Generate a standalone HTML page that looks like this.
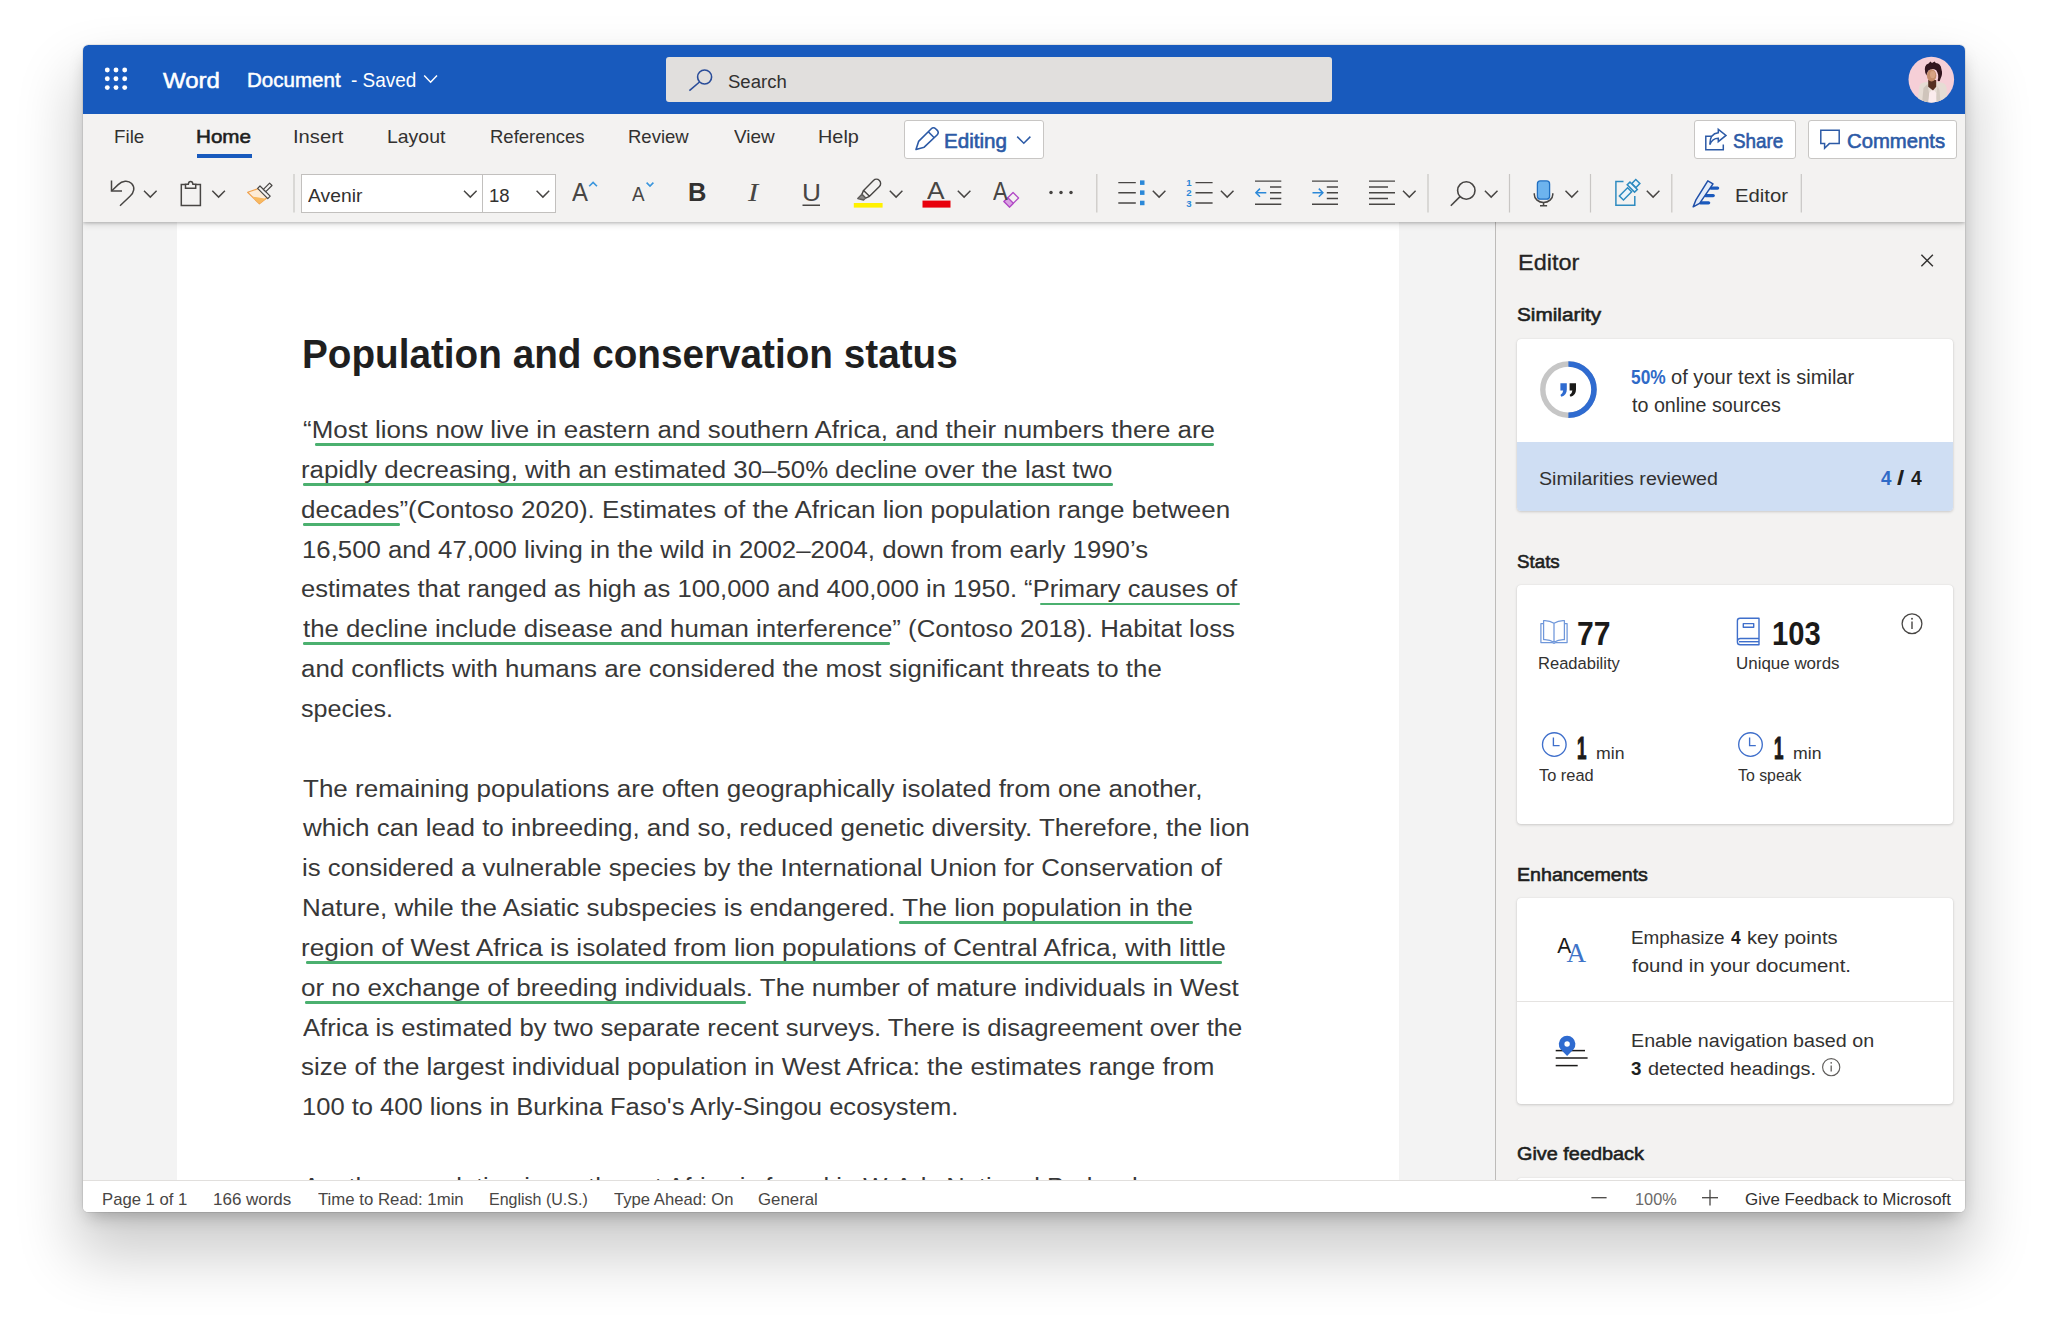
<!DOCTYPE html>
<html lang="en">
<head>
<meta charset="utf-8">
<title>Word - Document</title>
<style>
html,body{margin:0;padding:0;}
body{width:2048px;height:1331px;position:relative;overflow:hidden;background:#fff;font-family:"Liberation Sans",sans-serif;}
#win{position:absolute;left:83px;top:45px;width:1882px;height:1167px;border-radius:5.5px;
 box-shadow:0 0 0 1px rgba(0,0,0,.07),0 8px 18px -5px rgba(0,0,0,.27),0 37px 60px 8px rgba(0,0,0,.195);}
#clip{position:absolute;left:0;top:0;width:1882px;height:1167px;border-radius:5.5px;overflow:hidden;background:#f3f3f3;}
#pg{position:absolute;left:-83px;top:-45px;width:2048px;height:1331px;}
.a{position:absolute;}
#title{left:83px;top:45px;width:1882px;height:68.5px;background:#185abd;}
#search{left:666px;top:57px;width:666px;height:45px;background:#e1dfdd;border-radius:3px;}
#ribbon{left:83px;top:113px;width:1882px;height:109px;background:#f3f2f1;box-shadow:0 1px 3px rgba(0,0,0,.22),0 3px 7px rgba(0,0,0,.10);}
.btn{background:#fff;border:1px solid #c8c6c4;border-radius:3px;box-sizing:border-box;}
#fontbox{left:300.5px;top:174px;width:255px;height:39px;background:#fff;border:1px solid #c2c0be;box-sizing:border-box;}
#fontdiv{left:481.5px;top:175px;width:1px;height:37px;background:#c2c0be;}
#page{left:177px;top:222px;width:1222px;height:958px;background:#fff;}
#side{left:1495px;top:222px;width:470px;height:958px;background:#f3f2f1;border-left:1px solid #bdbbb9;box-sizing:border-box;}
.card{background:#fff;border-radius:4px;box-shadow:0 1px 3px rgba(0,0,0,.16),0 0 1px rgba(0,0,0,.12);}
#status{left:83px;top:1180px;width:1882px;height:32px;background:#fff;border-top:1px solid #e1dfdd;box-sizing:border-box;}
.t{position:absolute;white-space:pre;line-height:1;transform-origin:0 0;}
.ul{position:absolute;height:2.7px;border-radius:1.3px;background:#4bb06f;}
svg{position:absolute;left:0;top:0;overflow:visible;}
</style>
</head>
<body>
<div id="win"><div id="clip"><div id="pg">
<div class="a" id="page"></div>
<div class="a" id="doc" style="left:0;top:0;width:2048px;height:1180px;overflow:hidden;">
<div class="ul" style="left:315.0px;top:443.20px;width:898.8px"></div>
<div class="ul" style="left:302.5px;top:483.03px;width:810.0px"></div>
<div class="ul" style="left:302.5px;top:522.86px;width:97.5px"></div>
<div class="ul" style="left:1039.5px;top:602.52px;width:200.0px"></div>
<div class="ul" style="left:302.5px;top:642.35px;width:587.0px"></div>
<div class="ul" style="left:898.5px;top:921.16px;width:294.1px"></div>
<div class="ul" style="left:305.5px;top:960.99px;width:916.5px"></div>
<div class="ul" style="left:305.0px;top:1000.82px;width:441.2px"></div>
<span class="t" style="left:301.68px;top:335.00px;font-size:39.8px;color:#1f1f1f;font-weight:700;transform:scaleX(0.9722);">Population and conservation status</span>
<span class="t" style="left:303.12px;top:419.00px;font-size:23px;color:#383838;transform:scaleX(1.1270);">“Most lions now live in eastern and southern Africa, and their numbers there are</span>
<span class="t" style="left:301.38px;top:459.00px;font-size:23px;color:#383838;transform:scaleX(1.1234);">rapidly decreasing, with an estimated 30–50% decline over the last two</span>
<span class="t" style="left:301.37px;top:499.00px;font-size:23px;color:#383838;transform:scaleX(1.1319);">decades”(Contoso 2020). Estimates of the African lion population range between</span>
<span class="t" style="left:301.76px;top:539.00px;font-size:23px;color:#383838;transform:scaleX(1.1202);">16,500 and 47,000 living in the wild in 2002–2004, down from early 1990’s</span>
<span class="t" style="left:301.39px;top:578.00px;font-size:23px;color:#383838;transform:scaleX(1.1110);">estimates that ranged as high as 100,000 and 400,000 in 1950. “Primary causes of</span>
<span class="t" style="left:302.50px;top:618.00px;font-size:23px;color:#383838;transform:scaleX(1.1214);">the decline include disease and human interference” (Contoso 2018). Habitat loss</span>
<span class="t" style="left:301.38px;top:658.00px;font-size:23px;color:#383838;transform:scaleX(1.1240);">and conflicts with humans are considered the most significant threats to the</span>
<span class="t" style="left:301.41px;top:698.00px;font-size:23px;color:#383838;transform:scaleX(1.0915);">species.</span>
<span class="t" style="left:302.50px;top:778.00px;font-size:23px;color:#383838;transform:scaleX(1.1311);">The remaining populations are often geographically isolated from one another,</span>
<span class="t" style="left:302.50px;top:817.00px;font-size:23px;color:#383838;transform:scaleX(1.1300);">which can lead to inbreeding, and so, reduced genetic diversity. Therefore, the lion</span>
<span class="t" style="left:301.88px;top:857.00px;font-size:23px;color:#383838;transform:scaleX(1.1207);">is considered a vulnerable species by the International Union for Conservation of</span>
<span class="t" style="left:301.74px;top:897.00px;font-size:23px;color:#383838;transform:scaleX(1.1295);">Nature, while the Asiatic subspecies is endangered. The lion population in the</span>
<span class="t" style="left:301.36px;top:937.00px;font-size:23px;color:#383838;transform:scaleX(1.1416);">region of West Africa is isolated from lion populations of Central Africa, with little</span>
<span class="t" style="left:301.37px;top:977.00px;font-size:23px;color:#383838;transform:scaleX(1.1296);">or no exchange of breeding individuals. The number of mature individuals in West</span>
<span class="t" style="left:302.50px;top:1017.00px;font-size:23px;color:#383838;transform:scaleX(1.1138);">Africa is estimated by two separate recent surveys. There is disagreement over the</span>
<span class="t" style="left:301.37px;top:1056.00px;font-size:23px;color:#383838;transform:scaleX(1.1292);">size of the largest individual population in West Africa: the estimates range from</span>
<span class="t" style="left:302.38px;top:1096.00px;font-size:23px;color:#383838;transform:scaleX(1.1101);">100 to 400 lions in Burkina Faso&#x27;s Arly-Singou ecosystem.</span>
<span class="t" style="left:302.50px;top:1176.00px;font-size:23px;color:#383838;transform:scaleX(1.1091);">Another population in northwest Africa is found in W-Arly National Park, where</span>
</div>
<div class="a" id="side"></div>
<div class="a card" style="left:1517px;top:339px;width:435.5px;height:172px;overflow:hidden;"><div class="a" style="left:0;top:103px;width:100%;height:69px;background:#cfdef3;"></div></div>
<div class="a card" style="left:1517px;top:585px;width:435.5px;height:239px;"></div>
<div class="a card" style="left:1517px;top:898px;width:435.5px;height:206px;"><div class="a" style="left:0;top:102.5px;width:100%;height:1px;background:#e5e3e1;"></div></div>
<div class="a card" style="left:1517px;top:1178px;width:435.5px;height:60px;"></div>
<div class="a" id="ribbon"></div>
<div class="a" id="title"></div>
<div class="a" id="search"></div>
<div class="a btn" style="left:904px;top:120px;width:140px;height:39px;"></div>
<div class="a btn" style="left:1694px;top:120px;width:102px;height:39px;"></div>
<div class="a btn" style="left:1808px;top:120px;width:149px;height:39px;"></div>
<div class="a" style="left:196.75px;top:154px;width:55px;height:3.5px;background:#185abd;"></div>
<div class="a" id="fontbox"></div><div class="a" id="fontdiv"></div>
<div class="a" id="status"></div>
<svg width="2048" height="1331" viewBox="0 0 2048 1331" fill="none" stroke-linecap="butt">
<defs><clipPath id="av"><circle cx="1931.3" cy="79.6" r="22.8"/></clipPath></defs>
<!-- waffle -->
<g fill="#fff">
<circle cx="107.3" cy="70" r="2.45"/><circle cx="116" cy="70" r="2.45"/><circle cx="124.7" cy="70" r="2.45"/>
<circle cx="107.3" cy="78.8" r="2.45"/><circle cx="116" cy="78.8" r="2.45"/><circle cx="124.7" cy="78.8" r="2.45"/>
<circle cx="107.3" cy="87.6" r="2.45"/><circle cx="116" cy="87.6" r="2.45"/><circle cx="124.7" cy="87.6" r="2.45"/>
</g>
<polyline points="424.2,75.6 430.6,82.2 437,75.6" stroke="#fff" stroke-width="1.5"/>
<!-- title search icon -->
<g stroke="#2a4d99" stroke-width="1.6"><circle cx="704.6" cy="77" r="7"/><line x1="699.5" y1="82" x2="689.4" y2="90.7"/></g>
<!-- avatar -->
<g clip-path="url(#av)">
<rect x="1905" y="54" width="54" height="54" fill="#f6cfd7"/>
<path d="M1916.8 108 L1919.2 86.5 Q1920.2 83 1924 82.4 L1929 81.6 L1938.5 82 L1943 83 Q1946 84.2 1946.6 88 L1948 108 Z" fill="#e6dcd4"/>
<path d="M1921.5 108 L1923.5 88 L1927.5 84 L1929.5 96 L1927 108 Z" fill="#cfc4bb"/>
<path d="M1941 108 L1939.5 90 L1937.5 86 L1936 97 L1937 108 Z" fill="#d6ccc3"/>
<path d="M1927.8 108 L1929.2 93 L1933 88.5 L1936.2 93 L1936.4 108 Z" fill="#fbeced"/>
<path d="M1928.2 80 h8 v6.8 l-3.2 3.6 l-4.8 -3.6 z" fill="#553021"/>
<ellipse cx="1931.6" cy="75.4" rx="4.7" ry="6.2" fill="#c58d6c"/>
<ellipse cx="1932.6" cy="74.6" rx="2.6" ry="3.6" fill="#d7a283"/>
<path d="M1925.2 72.5 Q1923.6 65 1928.6 63.6 L1930.4 61.6 L1932 63 L1934.6 61.4 L1935.8 63 Q1940.8 63.6 1941.4 69 Q1943 74.4 1940.6 78.4 Q1939.8 82.4 1937.6 80.6 Q1939.4 74.4 1936.2 70.2 Q1932 67.6 1928.4 70.6 Q1927 72.6 1926.4 75.4 Z" fill="#33151e"/>
</g>
<!-- editing pencil -->
<g stroke="#2c5aa6" stroke-width="1.6" stroke-linejoin="round">
<path d="M916 149.5 L918.6 141.4 L931.3 128.7 a3 3 0 0 1 4.3 0 l1.7 1.7 a3 3 0 0 1 0 4.3 L924.2 147.2 Z"/><line x1="928.3" y1="131.8" x2="934.2" y2="137.7"/>
</g>
<polyline points="1017.2,136.6 1023.8,143.2 1030.4,136.6" stroke="#2c5aa6" stroke-width="1.5"/>
<!-- share -->
<g stroke="#2c5aa6" stroke-width="1.5" stroke-linejoin="miter">
<path d="M1711.5 136.3 H1705.8 V149.8 H1723.3 V144.5"/>
<path d="M1718.3 129.3 L1726 135.4 L1718.3 141.6 V138.2 C1714.3 138.2 1711.5 140.3 1709.8 144.6 C1709.8 137.3 1713.2 133.3 1718.3 132.8 Z"/>
</g>
<!-- comments -->
<path d="M1820.8 130.3 H1839.2 V143.6 H1829.3 L1824.6 148.2 V143.6 H1820.8 Z" stroke="#2c5aa6" stroke-width="1.5" stroke-linejoin="miter"/>
<!-- separators -->
<g stroke="#c8c6c4" stroke-width="1.2">
<line x1="294" y1="174" x2="294" y2="212.5"/><line x1="1096.8" y1="174" x2="1096.8" y2="212.5"/><line x1="1428" y1="174" x2="1428" y2="212.5"/>
<line x1="1509.5" y1="174" x2="1509.5" y2="212.5"/><line x1="1590.5" y1="174" x2="1590.5" y2="212.5"/><line x1="1671.8" y1="174" x2="1671.8" y2="212.5"/><line x1="1801.3" y1="174" x2="1801.3" y2="212.5"/>
</g>
<!-- chevrons toolbar -->
<g stroke="#484644" stroke-width="1.45">
<polyline points="144,190.7 150.3,197.1 156.6,190.7"/>
<polyline points="212.3,190.7 218.6,197.1 224.9,190.7"/>
<polyline points="464,190.7 470.3,197.1 476.6,190.7"/>
<polyline points="536.6,190.7 542.9,197.1 549.2,190.7"/>
<polyline points="889.8,190.7 896.1,197.1 902.4,190.7"/>
<polyline points="957.8,190.7 964.1,197.1 970.4,190.7"/>
<polyline points="1152.8,190.7 1159.1,197.1 1165.4,190.7"/>
<polyline points="1220.9,190.7 1227.2,197.1 1233.5,190.7"/>
<polyline points="1403,190.7 1409.3,197.1 1415.6,190.7"/>
<polyline points="1484.9,190.7 1491.2,197.1 1497.5,190.7"/>
<polyline points="1565.5,190.7 1571.8,197.1 1578.1,190.7"/>
<polyline points="1646.8,190.7 1653.1,197.1 1659.4,190.7"/>
</g>
<!-- undo -->
<g stroke="#484644" stroke-width="1.5" stroke-linejoin="miter">
<path d="M111.5 180.5 V191 H122"/>
<path d="M111.8 190.8 L118.2 184.6 C122.2 180.8 128.2 180 131.6 183.6 C135.2 187.4 134.2 192.6 130 196.2 L120 205.7"/>
</g>
<!-- clipboard -->
<g stroke="#484644" stroke-width="1.5">
<path d="M185.4 184.6 H181.3 V205.4 H200.4 V184.6 H195.8"/>
<path d="M185.5 188.3 V184.3 H188.3 Q188.6 181.6 190.6 181.6 Q192.7 181.6 192.9 184.3 H195.7 V188.3 Z"/>
</g>
<!-- format painter -->
<path d="M247.6 192.3 L258.6 188.4 L267.6 197.2 L259.4 203.8 Z" fill="#fdebd6" stroke="#f0a350" stroke-width="1.2" stroke-linejoin="round"/>
<path d="M252.2 196.6 L266.2 198.7 L259.4 203.6 Z" fill="#f8b95f"/>
<path d="M257.6 188.4 L260 186 L270.2 196.2 L267.8 198.6 Z" fill="#f3f2f1" stroke="#484644" stroke-width="1.2" stroke-linejoin="round"/>
<path d="M263.4 189.3 L269.6 183.1 L272 185.5 L265.8 191.7 Z" fill="#f3f2f1" stroke="#484644" stroke-width="1.2" stroke-linejoin="round"/>
<!-- A carets -->
<polyline points="589.2,186.2 593.1,182.4 597,186.2" stroke="#3a96dd" stroke-width="1.6"/>
<polyline points="646.6,182.6 650,186 653.4,182.6" stroke="#3a96dd" stroke-width="1.6"/>
<!-- U underline -->
<line x1="802.5" y1="205.3" x2="820" y2="205.3" stroke="#484644" stroke-width="1.5"/>
<!-- highlighter -->
<g transform="translate(868.3,191.6) rotate(45)" stroke="#484644" stroke-width="1.4" stroke-linejoin="round">
<path d="M-4.2 2.5 V-11.5 a4.2 4.2 0 0 1 8.4 0 V2.5 Z" fill="#f3f2f1"/>
<path d="M-4.2 2.5 L-2.6 6.5 H2.6 L4.2 2.5"/>
<path d="M-2.6 6.5 V12.3 L2.6 9.3 V6.5 Z" fill="#8a8886" stroke="#605e5c"/>
</g>
<rect x="853.8" y="203" width="28.8" height="4.6" fill="#fff100"/>
<!-- font color bar -->
<rect x="922.5" y="200.6" width="28" height="7" fill="#e8000d"/>
<!-- eraser -->
<g transform="translate(1011.3,199.8) rotate(-45)" stroke="#b24ac6" stroke-width="1.3" stroke-linejoin="round">
<rect x="-6.4" y="-3.9" width="12.8" height="7.8" fill="#f3f2f1"/><rect x="-6.4" y="-3.9" width="5.4" height="7.8" fill="#d9a3e2"/>
</g>
<!-- more dots -->
<g fill="#484644"><circle cx="1051" cy="192.6" r="1.75"/><circle cx="1061" cy="192.6" r="1.75"/><circle cx="1071" cy="192.6" r="1.75"/></g>
<!-- bullets -->
<g stroke="#484644" stroke-width="1.45"><line x1="1118.3" y1="182.6" x2="1135.8" y2="182.6"/><line x1="1118.3" y1="192.7" x2="1135.8" y2="192.7"/><line x1="1118.3" y1="203" x2="1135.8" y2="203"/></g>
<g fill="#2b88d8"><rect x="1140" y="180.4" width="4.5" height="4.5"/><rect x="1140" y="190.4" width="4.5" height="4.5"/><rect x="1140" y="200.7" width="4.5" height="4.5"/></g>
<!-- numbering -->
<g stroke="#484644" stroke-width="1.45"><line x1="1195.5" y1="182.6" x2="1212.6" y2="182.6"/><line x1="1195.5" y1="192.7" x2="1212.6" y2="192.7"/><line x1="1195.5" y1="203" x2="1212.6" y2="203"/></g>
<g fill="#2b88d8" stroke="none" font-family="'Liberation Sans',sans-serif" font-size="9.6" font-weight="700"><text x="1186.2" y="186.2">1</text><text x="1186.2" y="196.3">2</text><text x="1186.2" y="206.6">3</text></g>
<!-- outdent -->
<g stroke="#484644" stroke-width="1.45"><line x1="1255" y1="181.1" x2="1281.3" y2="181.1"/><line x1="1255" y1="204.3" x2="1281.3" y2="204.3"/><line x1="1270" y1="186.9" x2="1281.3" y2="186.9"/><line x1="1270" y1="192.7" x2="1281.3" y2="192.7"/><line x1="1270" y1="198.5" x2="1281.3" y2="198.5"/></g>
<g stroke="#2b88d8" stroke-width="1.5"><line x1="1256" y1="192.7" x2="1266.3" y2="192.7"/><polyline points="1260,188.6 1255.9,192.7 1260,196.8"/></g>
<!-- indent -->
<g stroke="#484644" stroke-width="1.45"><line x1="1312" y1="181.1" x2="1338" y2="181.1"/><line x1="1312" y1="204.3" x2="1338" y2="204.3"/><line x1="1326.8" y1="186.9" x2="1338" y2="186.9"/><line x1="1326.8" y1="192.7" x2="1338" y2="192.7"/><line x1="1326.8" y1="198.5" x2="1338" y2="198.5"/></g>
<g stroke="#2b88d8" stroke-width="1.5"><line x1="1312.5" y1="192.7" x2="1322.8" y2="192.7"/><polyline points="1318.8,188.6 1322.9,192.7 1318.8,196.8"/></g>
<!-- align -->
<g stroke="#484644" stroke-width="1.45"><line x1="1369" y1="181.1" x2="1395" y2="181.1"/><line x1="1369" y1="186.9" x2="1388" y2="186.9"/><line x1="1369" y1="192.7" x2="1395" y2="192.7"/><line x1="1369" y1="198.5" x2="1388" y2="198.5"/><line x1="1369" y1="204.3" x2="1395" y2="204.3"/></g>
<!-- toolbar search -->
<g stroke="#484644" stroke-width="1.6"><circle cx="1466.3" cy="190.5" r="8.7"/><line x1="1460" y1="196.6" x2="1450.8" y2="205.8"/></g>
<!-- mic -->
<rect x="1537.4" y="180.9" width="12.2" height="18.3" rx="3" fill="#6db3ee" stroke="#1f6fc2" stroke-width="1.3"/>
<g stroke="#484644" stroke-width="1.5"><path d="M1534.3 193.3 V194.5 a9.25 8 0 0 0 18.5 0 V193.3"/><line x1="1543.55" y1="202.5" x2="1543.55" y2="205.6"/><line x1="1540" y1="205.7" x2="1547.1" y2="205.7"/></g>
<!-- designer -->
<g stroke="#2e8bc0" stroke-width="1.5" stroke-linejoin="miter">
<path d="M1623.5 181.6 H1615.9 V205.3 H1634.8 V196"/>
<g transform="translate(1629.2,190.2) rotate(45)"><rect x="-2.9" y="-12.2" width="5.8" height="5.6" fill="#eaf4fb"/><rect x="-5.2" y="-6.3" width="10.4" height="3.9" fill="#eaf4fb"/><rect x="-2.9" y="-0.6" width="5.8" height="11.6" fill="#eaf4fb"/></g>
</g>
<!-- editor icon -->
<g stroke="#1b5abd" stroke-width="3.3" stroke-linecap="round"><line x1="1711" y1="188.1" x2="1717.6" y2="188.1"/><line x1="1705.6" y1="195.6" x2="1713.2" y2="195.6"/><line x1="1700.4" y1="202.8" x2="1708.6" y2="202.8"/></g>
<path d="M1707.8 180.8 L1713 183.8 L1699.6 203.4 L1693.2 206.8 L1695.8 200.2 Z" fill="#e3ecf9" stroke="#1f4fa8" stroke-width="1.5" stroke-linejoin="round"/>
<!-- sidebar close X -->
<g stroke="#323130" stroke-width="1.4"><line x1="1921.4" y1="254.7" x2="1932.9" y2="266.2"/><line x1="1932.9" y1="254.7" x2="1921.4" y2="266.2"/></g>
<!-- donut -->
<circle cx="1568.4" cy="389.6" r="25.6" stroke="#c6c6c6" stroke-width="5.4"/>
<path d="M1568.4 364 A25.6 25.6 0 0 1 1568.4 415.2" stroke="#2f6bd0" stroke-width="5.6"/>
<!-- quote marks -->
<path d="M1560.4 383.2 h6.4 v6.2 q0 5.6 -5.4 7.4 l-1 -1.9 q2.6 -1.3 2.8 -4.4 h-2.8 z" fill="#2f6bd0"/>
<path d="M1569.6 383.2 h6.4 v6.2 q0 5.6 -5.4 7.4 l-1 -1.9 q2.6 -1.3 2.8 -4.4 h-2.8 z" fill="#1b1a19"/>
<!-- open book -->
<g stroke="#6f97da" stroke-width="1.25" stroke-linejoin="round">
<path d="M1554 623.2 Q1549.5 620.2 1543.6 620.6 V639.6 Q1549.5 639.2 1554 642.2 Q1558.5 639.2 1564.4 639.6 V620.6 Q1558.5 620.2 1554 623.2 V642"/>
<path d="M1543.6 623.5 H1540.9 V642.6 H1552 Q1554 644 1556 642.6 H1567.1 V623.5 H1564.4"/>
</g>
<!-- closed book -->
<g stroke="#3f6fcb" stroke-width="1.4" stroke-linejoin="round">
<path d="M1759 638.5 V618.2 H1740 Q1737.4 618.2 1737.4 620.8 V642 Q1737.4 644.8 1740.2 644.8 H1759 V638.5 H1740.4 Q1737.6 638.5 1737.4 641.5"/>
<line x1="1739" y1="641.7" x2="1759" y2="641.7"/>
<rect x="1743.3" y="623.6" width="10.4" height="3.6"/>
</g>
<!-- info big -->
<g stroke="#484644" stroke-width="1.3"><circle cx="1912" cy="623.8" r="9.9"/><line x1="1912" y1="621.6" x2="1912" y2="629" stroke-width="1.4"/></g><circle cx="1912" cy="618.7" r="0.95" fill="#484644"/>
<!-- clocks -->
<g stroke="#3f6fcb" stroke-width="1.35"><circle cx="1554.3" cy="744.5" r="11.8"/><polyline points="1553.4,737.5 1553.4,745.6 1559.6,745.6"/><circle cx="1750.5" cy="744.5" r="11.8"/><polyline points="1749.6,737.5 1749.6,745.6 1755.8,745.6"/></g>
<!-- AA icon -->
<g stroke="none"><text x="1557.2" y="953.2" font-family="'Liberation Sans',sans-serif" font-size="22" fill="#1b1a19" textLength="14" lengthAdjust="spacingAndGlyphs">A</text>
<text x="1566.4" y="961.6" font-family="'Liberation Serif',serif" font-size="27" fill="#3f74c9" textLength="19.6" lengthAdjust="spacingAndGlyphs">A</text></g>
<!-- nav icon -->
<g stroke="#1b1a19" stroke-width="1.5"><line x1="1555.7" y1="1050.6" x2="1585" y2="1050.6"/><line x1="1555.7" y1="1058.1" x2="1587.6" y2="1058.1"/><line x1="1555.7" y1="1065.6" x2="1577.7" y2="1065.6"/></g>
<path d="M1567.1 1056 L1560.6 1049.2 A8.3 8.3 0 1 1 1573.6 1049.2 Z" fill="#2f6bd0"/><circle cx="1567.1" cy="1044" r="2.7" fill="#fff"/>
<!-- info small -->
<g stroke="#605e5c" stroke-width="1.15"><circle cx="1831.2" cy="1067.2" r="8.6"/><line x1="1831.2" y1="1065.4" x2="1831.2" y2="1071.6" stroke-width="1.3"/></g><circle cx="1831.2" cy="1062.8" r="0.85" fill="#605e5c"/>
<!-- status zoom -->
<g stroke="#484644" stroke-width="1.3"><line x1="1591.4" y1="1197.7" x2="1606.6" y2="1197.7"/><line x1="1702" y1="1197.7" x2="1718" y2="1197.7"/><line x1="1710" y1="1189.8" x2="1710" y2="1205.6"/></g>
</svg>

<span class="t" style="left:162.75px;top:70.00px;font-size:22.5px;color:#fff;-webkit-text-stroke:0.5px #fff;transform:scaleX(1.0673);">Word</span>
<span class="t" style="left:247.25px;top:70.00px;font-size:20.6px;color:#fff;-webkit-text-stroke:0.5px #fff;transform:scaleX(0.9973);">Document</span>
<span class="t" style="left:350.58px;top:70.00px;font-size:20.6px;color:#fff;transform:scaleX(0.9203);">- Saved</span>
<span class="t" style="left:728.28px;top:72.00px;font-size:19.2px;color:#323130;transform:scaleX(0.9661);">Search</span>
<span class="t" style="left:113.99px;top:128.00px;font-size:18.6px;color:#323130;transform:scaleX(1.0089);">File</span>
<span class="t" style="left:293.33px;top:128.00px;font-size:18.6px;color:#323130;transform:scaleX(1.0852);">Insert</span>
<span class="t" style="left:386.95px;top:128.00px;font-size:18.6px;color:#323130;transform:scaleX(1.0455);">Layout</span>
<span class="t" style="left:489.76px;top:128.00px;font-size:18.6px;color:#323130;transform:scaleX(0.9947);">References</span>
<span class="t" style="left:627.50px;top:128.00px;font-size:18.6px;color:#323130;transform:scaleX(0.9958);">Review</span>
<span class="t" style="left:733.75px;top:128.00px;font-size:18.6px;color:#323130;transform:scaleX(1.0188);">View</span>
<span class="t" style="left:818.18px;top:128.00px;font-size:18.6px;color:#323130;transform:scaleX(1.0676);">Help</span>
<span class="t" style="left:196.39px;top:128.00px;font-size:18.6px;color:#201f1e;-webkit-text-stroke:0.55px #201f1e;transform:scaleX(1.1094);">Home</span>
<span class="t" style="left:944.46px;top:132.00px;font-size:19.8px;color:#2c5aa6;-webkit-text-stroke:0.6px #2c5aa6;transform:scaleX(1.0424);">Editing</span>
<span class="t" style="left:1733.32px;top:131.00px;font-size:20.2px;color:#2c5aa6;-webkit-text-stroke:0.6px #2c5aa6;transform:scaleX(0.9340);">Share</span>
<span class="t" style="left:1846.99px;top:131.00px;font-size:20.2px;color:#2c5aa6;-webkit-text-stroke:0.6px #2c5aa6;transform:scaleX(1.0052);">Comments</span>
<span class="t" style="left:308.00px;top:187.00px;font-size:18.8px;color:#323130;transform:scaleX(1.0283);">Avenir</span>
<span class="t" style="left:489.01px;top:187.00px;font-size:18.8px;color:#323130;transform:scaleX(0.9868);">18</span>
<span class="t" style="left:1734.68px;top:186.00px;font-size:19px;color:#323130;transform:scaleX(1.0677);">Editor</span>
<span class="t" style="left:571.75px;top:180.00px;font-size:25.8px;color:#484644;transform:scaleX(0.9265);">A</span>
<span class="t" style="left:632.00px;top:184.00px;font-size:20.3px;color:#484644;transform:scaleX(0.9286);">A</span>
<span class="t" style="left:688.00px;top:180.00px;font-size:25.5px;color:#323130;font-weight:700;transform:scaleX(1.0000);">B</span>
<span class="t" style="left:748.00px;top:180.00px;font-size:25.5px;color:#484644;font-family:'Liberation Serif',serif;font-style:italic;transform:scaleX(1.2000);">I</span>
<span class="t" style="left:801.61px;top:181.00px;font-size:24.5px;color:#484644;transform:scaleX(1.0714);">U</span>
<span class="t" style="left:927.00px;top:180.00px;font-size:23.4px;color:#484644;transform:scaleX(1.1250);">A</span>
<span class="t" style="left:992.50px;top:179.00px;font-size:25px;color:#484644;transform:scaleX(0.8824);">A</span>
<span class="t" style="left:1518.10px;top:252.00px;font-size:22.4px;color:#252423;-webkit-text-stroke:0.3px #252423;transform:scaleX(1.0491);">Editor</span>
<span class="t" style="left:1516.92px;top:305.00px;font-size:19.2px;color:#201f1e;-webkit-text-stroke:0.6px #201f1e;transform:scaleX(1.0812);">Similarity</span>
<span class="t" style="left:1631.11px;top:368.00px;font-size:19.5px;color:#2f6ac7;font-weight:700;transform:scaleX(0.8882);">50%</span>
<span class="t" style="left:1671.47px;top:368.00px;font-size:19.5px;color:#323130;transform:scaleX(1.0311);">of your text is similar</span>
<span class="t" style="left:1632.00px;top:396.00px;font-size:19.5px;color:#323130;transform:scaleX(1.0102);">to online sources</span>
<span class="t" style="left:1539.48px;top:469.00px;font-size:19.2px;color:#323130;transform:scaleX(1.0231);">Similarities reviewed</span>
<span class="t" style="left:1880.50px;top:467.00px;font-size:21px;color:#2f6ac7;font-weight:700;transform:scaleX(0.8958);">4</span>
<span class="t" style="left:1897.00px;top:467.00px;font-size:21px;color:#201f1e;font-weight:700;transform:scaleX(1.2500);">/</span>
<span class="t" style="left:1911.00px;top:467.00px;font-size:21px;color:#201f1e;font-weight:700;transform:scaleX(0.9167);">4</span>
<span class="t" style="left:1517.02px;top:552.00px;font-size:19.2px;color:#201f1e;-webkit-text-stroke:0.6px #201f1e;transform:scaleX(0.9767);">Stats</span>
<span class="t" style="left:1577.07px;top:618.00px;font-size:32.5px;color:#1b1a19;font-weight:700;transform:scaleX(0.9265);">77</span>
<span class="t" style="left:1772.46px;top:618.00px;font-size:32.5px;color:#1b1a19;font-weight:700;transform:scaleX(0.8971);">103</span>
<span class="t" style="left:1538.26px;top:656.00px;font-size:16.7px;color:#323130;transform:scaleX(0.9909);">Readability</span>
<span class="t" style="left:1736.49px;top:656.00px;font-size:16.7px;color:#323130;transform:scaleX(1.0149);">Unique words</span>
<span class="t" style="left:1577.47px;top:732.00px;font-size:32.2px;color:#1b1a19;font-weight:700;-webkit-text-stroke:1.2px #1b1a19;transform:scaleX(0.5294);">1</span>
<span class="t" style="left:1596.46px;top:745.00px;font-size:17px;color:#323130;transform:scaleX(1.0385);">min</span>
<span class="t" style="left:1539.25px;top:768.00px;font-size:16.7px;color:#323130;transform:scaleX(0.9818);">To read</span>
<span class="t" style="left:1773.72px;top:732.00px;font-size:32.2px;color:#1b1a19;font-weight:700;-webkit-text-stroke:1.2px #1b1a19;transform:scaleX(0.5294);">1</span>
<span class="t" style="left:1793.21px;top:745.00px;font-size:17px;color:#323130;transform:scaleX(1.0385);">min</span>
<span class="t" style="left:1737.50px;top:768.00px;font-size:16.7px;color:#323130;transform:scaleX(0.9515);">To speak</span>
<span class="t" style="left:1516.98px;top:865.00px;font-size:19.2px;color:#201f1e;-webkit-text-stroke:0.6px #201f1e;transform:scaleX(1.0228);">Enhancements</span>
<span class="t" style="left:1631.02px;top:928.00px;font-size:19.2px;color:#323130;transform:scaleX(0.9849);">Emphasize</span>
<span class="t" style="left:1731.30px;top:928.00px;font-size:19.2px;color:#201f1e;font-weight:700;transform:scaleX(0.9091);">4</span>
<span class="t" style="left:1747.35px;top:928.00px;font-size:19.2px;color:#323130;transform:scaleX(1.0482);">key points</span>
<span class="t" style="left:1632.00px;top:956.00px;font-size:19.2px;color:#323130;transform:scaleX(1.0637);">found in your document.</span>
<span class="t" style="left:1630.97px;top:1031.00px;font-size:19.2px;color:#323130;transform:scaleX(1.0264);">Enable navigation based on</span>
<span class="t" style="left:1631.02px;top:1059.00px;font-size:19.2px;color:#201f1e;font-weight:700;transform:scaleX(0.9778);">3</span>
<span class="t" style="left:1647.96px;top:1059.00px;font-size:19.2px;color:#323130;transform:scaleX(1.0356);">detected headings.</span>
<span class="t" style="left:1516.97px;top:1144.00px;font-size:19.2px;color:#201f1e;-webkit-text-stroke:0.6px #201f1e;transform:scaleX(1.0344);">Give feedback</span>
<span class="t" style="left:101.69px;top:1192.00px;font-size:16.6px;color:#484644;transform:scaleX(1.0060);">Page 1 of 1</span>
<span class="t" style="left:213.18px;top:1192.00px;font-size:16.6px;color:#484644;transform:scaleX(1.0227);">166 words</span>
<span class="t" style="left:318.00px;top:1192.00px;font-size:16.6px;color:#484644;transform:scaleX(1.0105);">Time to Read: 1min</span>
<span class="t" style="left:489.04px;top:1192.00px;font-size:16.6px;color:#484644;transform:scaleX(0.9650);">English (U.S.)</span>
<span class="t" style="left:614.00px;top:1192.00px;font-size:16.6px;color:#484644;transform:scaleX(1.0034);">Type Ahead: On</span>
<span class="t" style="left:757.59px;top:1192.00px;font-size:16.6px;color:#484644;transform:scaleX(1.0140);">General</span>
<span class="t" style="left:1635.22px;top:1192.00px;font-size:16.6px;color:#6b6967;transform:scaleX(0.9829);">100%</span>
<span class="t" style="left:1744.58px;top:1192.00px;font-size:16.6px;color:#323130;transform:scaleX(1.0199);">Give Feedback to Microsoft</span>
</div></div></div>
</body>
</html>
